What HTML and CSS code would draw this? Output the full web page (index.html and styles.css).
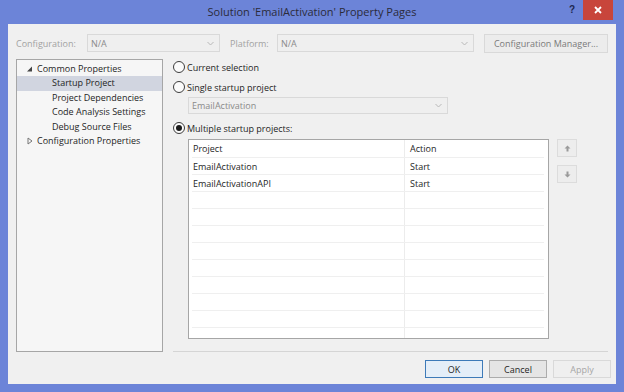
FILE: index.html
```html
<!DOCTYPE html>
<html lang="en">
  <head>
    <meta charset="UTF-8" />
    <title>Property Pages</title>
    <link rel="stylesheet" href="styles.css">
  </head>
  <body>
    <div class="window">
      <div class="titlebar">
        <span></span>
        <span class="title">Solution 'EmailActivation' Property Pages</span>
        <div class="title-buttons">
          <span class="help">?</span>
          <span class="close">
            <svg width="8" height="8" viewBox="0 0 8 8"><path d="M1 1L7 7M7 1L1 7" stroke="#fff" stroke-width="1.8"/></svg>
          </span>
        </div>
      </div>

      <div class="client">
        <!-- configuration / platform row -->
        <div class="config-row">
          <span class="label label-config">Configuration:</span>
          <div class="combo combo-config">
            <span>N/A</span>
            <svg class="chevron" width="7" height="5" viewBox="0 0 7 5"><path d="M0.5 1L3.5 4L6.5 1" fill="none" stroke="#b8b8b8"/></svg>
          </div>
          <span class="label label-platform">Platform:</span>
          <div class="combo combo-platform">
            <span>N/A</span>
            <svg class="chevron" width="7" height="5" viewBox="0 0 7 5"><path d="M0.5 1L3.5 4L6.5 1" fill="none" stroke="#b8b8b8"/></svg>
          </div>
          <button class="btn btn-config">Configuration Manager...</button>
        </div>

        <div class="main">
          <!-- tree on the left -->
          <div class="tree">
            <div class="tree-item">
              <svg class="twisty" width="6" height="6" viewBox="0 0 6 6"><path d="M5 0.5V5.5H0Z" fill="#444"/></svg>
              Common Properties
            </div>
            <div class="tree-item child selected">Startup Project</div>
            <div class="tree-item child">Project Dependencies</div>
            <div class="tree-item child">Code Analysis Settings</div>
            <div class="tree-item child">Debug Source Files</div>
            <div class="tree-item">
              <svg class="twisty" width="6" height="8" viewBox="0 0 6 8"><path d="M1 1L5 4L1 7Z" fill="none" stroke="#777"/></svg>
              Configuration Properties
            </div>
          </div>

          <!-- startup project page -->
          <div class="page">
            <div class="radio-row"><span class="radio"></span>Current selection</div>
            <div class="radio-row second"><span class="radio"></span>Single startup project</div>
            <div class="combo combo-single">
              <span>EmailActivation</span>
              <svg class="chevron" width="7" height="5" viewBox="0 0 7 5"><path d="M0.5 1L3.5 4L6.5 1" fill="none" stroke="#b8b8b8"/></svg>
            </div>
            <div class="radio-row third"><span class="radio checked"></span>Multiple startup projects:</div>

            <div class="grid-area">
              <div class="grid">
                <table>
                  <tr class="head"><td class="col-project">Project</td><td>Action</td></tr>
                  <tr><td class="col-project">EmailActivation</td><td>Start</td></tr>
                  <tr><td class="col-project">EmailActivationAPI</td><td>Start</td></tr>
                  <tr><td class="col-project"></td><td></td></tr>
                  <tr><td class="col-project"></td><td></td></tr>
                  <tr><td class="col-project"></td><td></td></tr>
                  <tr><td class="col-project"></td><td></td></tr>
                  <tr><td class="col-project"></td><td></td></tr>
                  <tr><td class="col-project"></td><td></td></tr>
                  <tr><td class="col-project"></td><td></td></tr>
                  <tr><td class="col-project"></td><td></td></tr>
                  <tr><td class="col-project"></td><td></td></tr>
                </table>
              </div>
              <div class="move-buttons">
                <span class="move">
                  <svg width="7" height="7" viewBox="0 0 7 7"><path d="M3.5 0.5L6.5 3.5H4.5V6.5H2.5V3.5H0.5Z" fill="#9a9a9a"/></svg>
                </span>
                <span class="move">
                  <svg width="7" height="7" viewBox="0 0 7 7"><path d="M3.5 6.5L6.5 3.5H4.5V0.5H2.5V3.5H0.5Z" fill="#9a9a9a"/></svg>
                </span>
              </div>
            </div>
          </div>
        </div>

        <div class="footer">
          <button class="btn btn-ok">OK</button>
          <button class="btn btn-cancel">Cancel</button>
          <button class="btn btn-apply">Apply</button>
        </div>
      </div>
    </div>
  </body>
</html>
```

FILE: styles.css
```css
body {
  margin: 0;
  background-color: #6c84d8;
  font-family: "Open Sans", "Noto Sans", sans-serif;
  font-size: 9px;
  color: #1e1e1e;
}

.window {
  width: 624px;
  height: 392px;
  background-color: #6c84d8;
  display: flex;
  flex-direction: column;
}

.titlebar {
  height: 24px;
  display: grid;
  grid-template-columns: 1fr auto 1fr;
  align-items: start;
}

.title {
  font-size: 11px;
  color: #2b2b3a;
  line-height: 24px;
}

.title-buttons {
  display: flex;
  justify-content: flex-end;
  align-items: flex-start;
  padding-right: 11px;
}

.help {
  font-family: "Liberation Sans", sans-serif;
  font-weight: bold;
  font-size: 10px;
  color: #1d2850;
  margin-right: 8px;
  margin-top: 4px;
}

.close {
  width: 30px;
  height: 20px;
  background-color: #c8453b;
  display: flex;
  justify-content: center;
  align-items: center;
}

.client {
  margin: 0 8px 8px 8px;
  height: 360px;
  background-color: #f0f0f0;
  display: flex;
  flex-direction: column;
}

/* configuration row */
.config-row {
  display: flex;
  align-items: center;
  height: 18px;
  margin-top: 10px;
  padding-left: 8px;
}

.label {
  color: #a2a2a2;
}

.label-config {
  width: 71px;
}

.label-platform {
  width: 47px;
  margin-left: 10px;
}

.combo {
  box-sizing: border-box;
  height: 18px;
  border: 1px solid #d9d9d9;
  background-color: #efefef;
  color: #8a8a8a;
  display: flex;
  align-items: center;
  justify-content: space-between;
  padding: 0 5px 0 3px;
}

.combo-config {
  width: 133px;
}

.combo-platform {
  width: 197px;
}

.btn {
  box-sizing: border-box;
  font-family: inherit;
  font-size: 9px;
  padding: 0;
  border: 1px solid #acacac;
  background-color: #e5e5e5;
  color: #1e1e1e;
}

.btn-config {
  width: 124px;
  height: 19px;
  margin-left: 10px;
  border-color: #d9d9d9;
  background-color: #ececec;
  color: #7a7a7a;
}

.main {
  display: flex;
  margin-top: 7px;
  padding-left: 8px;
  height: 293px;
}

/* tree */
.tree {
  box-sizing: border-box;
  width: 147px;
  height: 293px;
  border: 1px solid #a6a6a6;
  background-color: #f6f6f6;
  padding-top: 2px;
}

.tree-item {
  height: 14.4px;
  line-height: 14.4px;
  padding-left: 20px;
  display: flex;
  align-items: center;
  white-space: nowrap;
}

.tree-item.child {
  padding-left: 35px;
}

.tree-item.selected {
  background-color: #d1d5e0;
}

.twisty {
  margin-left: -10px;
  width: 10px;
  flex-shrink: 0;
  box-sizing: border-box;
  padding-right: 4px;
}

/* page */
.page {
  box-sizing: border-box;
  width: 435px;
  height: 293px;
  margin-left: 10px;
  border-bottom: 1px solid #d5d5d5;
  padding-top: 1px;
}

.radio-row {
  height: 14px;
  display: flex;
  align-items: center;
}

.radio-row.second {
  margin-top: 6px;
}

.radio-row.third {
  margin-top: 7px;
}

.radio {
  box-sizing: border-box;
  width: 12px;
  height: 12px;
  border: 1px solid #3c3c3c;
  border-radius: 50%;
  background-color: #fbfbfb;
  margin-right: 2px;
  display: flex;
  justify-content: center;
  align-items: center;
}

.radio.checked::after {
  content: "";
  width: 6px;
  height: 6px;
  border-radius: 50%;
  background-color: #1a1a1a;
}

.combo-single {
  width: 260px;
  height: 17px;
  margin: 3px 0 0 15px;
}

.grid-area {
  display: flex;
  margin: 4px 0 0 15px;
}

.grid {
  box-sizing: border-box;
  width: 361px;
  height: 200px;
  border: 1px solid #a6a6a6;
  background-color: #fff;
  overflow: hidden;
  padding: 0 4px 0 3px;
}

.grid table {
  width: 100%;
  border-collapse: collapse;
}

.grid td {
  height: 16px;
  padding: 0 0 0 5px;
  border-bottom: 1px solid #efefef;
}

.grid tr.head td {
  height: 17px;
}

.grid td.col-project {
  width: 211px;
  padding-left: 1px;
  border-right: 1px solid #ececec;
}

.move-buttons {
  display: flex;
  flex-direction: column;
  gap: 8px;
  margin-left: 8px;
}

.move {
  box-sizing: border-box;
  width: 20px;
  height: 18px;
  border: 1px solid #dcdcdc;
  background-color: #ededed;
  display: flex;
  justify-content: center;
  align-items: center;
}

/* dialog buttons */
.footer {
  display: flex;
  justify-content: flex-end;
  gap: 6px;
  margin-top: 8px;
  padding-right: 5px;
}

.footer .btn {
  width: 58px;
  height: 18px;
}

.btn-ok {
  border-color: #3d7ab8;
  background-color: #e4eef8;
}

.btn-apply {
  border-color: #d9d9d9;
  background-color: #efefef;
  color: #a6a6a6;
}
```
